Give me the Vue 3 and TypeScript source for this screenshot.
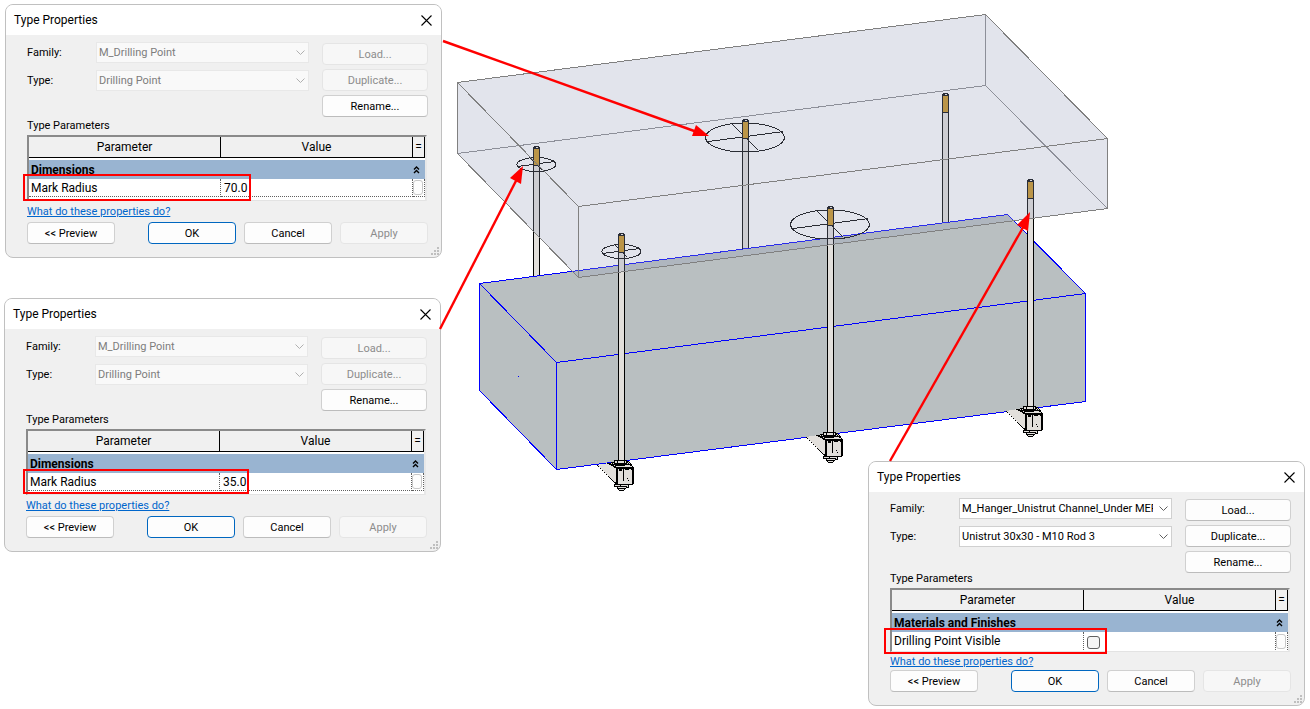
<script setup lang="ts">
interface TypeDialog {
  id: string
  left: number
  top: number
  family: string
  type: string
  locked: boolean
  compact: boolean
  group: string
  parameter: string
  value: string | null
}

interface Rod {
  x: number
  top: number
  bottom: number
  radius: number
}

const dialogs: TypeDialog[] = [
  { id: 'large', left: 5, top: 4, family: 'M_Drilling Point', type: 'Drilling Point', locked: true, compact: false, group: 'Dimensions', parameter: 'Mark Radius', value: '70.0' },
  { id: 'small', left: 4, top: 298, family: 'M_Drilling Point', type: 'Drilling Point', locked: true, compact: false, group: 'Dimensions', parameter: 'Mark Radius', value: '35.0' },
  { id: 'hanger', left: 868, top: 461, family: 'M_Hanger_Unistrut Channel_Under MEP', type: 'Unistrut 30x30 - M10 Rod 3', locked: false, compact: true, group: 'Materials and Finishes', parameter: 'Drilling Point Visible', value: null },
]

const backRods: Rod[] = [
  { x: 533, top: 147, bottom: 280, radius: 20 },
  { x: 742, top: 120, bottom: 253, radius: 40 },
  { x: 942, top: 94, bottom: 227, radius: 0 },
]

const frontRods: Rod[] = [
  { x: 618, top: 234, bottom: 462, radius: 20 },
  { x: 827, top: 207, bottom: 434, radius: 40 },
  { x: 1027, top: 180, bottom: 408, radius: 0 },
]

const allRods: Rod[] = [...backRods, ...frontRods]
</script>

<template>
  <main class="stage">
    <svg class="layer" role="img" aria-label="3D view of hangers with drilling points">
      <g class="crisp">
        <g v-for="rod in backRods" :key="rod.x">
          <rect class="rod" :x="rod.x" :y="rod.top" width="7" :height="rod.bottom - rod.top" />
          <path class="ink" :d="`M${rod.x + 0.5} ${rod.top}V${rod.bottom}M${rod.x + 6.5} ${rod.top}V${rod.bottom}`" />
        </g>

        <path class="block" d="M479.5 283.5L1007.5 214.5L1085.5 293.5V401.5L556.5 469.5L479.5 390.5Z" />
        <path class="block-edge" d="M479.5 283.5L556.5 362.5L1085.5 293.5M556.5 362.5V469.5" />
        <rect x="518" y="376" width="1" height="1" fill="#0000ff" />

        <g v-for="rod in frontRods" :key="rod.x">
          <rect class="rod" :x="rod.x" :y="rod.top" width="7" :height="rod.bottom - rod.top" />
          <path class="ink" :d="`M${rod.x + 0.5} ${rod.top}V${rod.bottom}M${rod.x + 6.5} ${rod.top}V${rod.bottom}`" />
        </g>

        <g v-for="rod in allRods" :key="'m' + rod.x">
          <g v-if="rod.radius" :transform="`translate(${rod.x + 3} ${rod.top + 17})`">
            <ellipse v-if="rod.radius > 30" class="ink" cx="0" cy="0.5" rx="39.5" ry="14.5" />
            <ellipse v-else class="ink" cx="0.5" cy="0.5" rx="19.5" ry="7" />
            <path v-if="rod.radius > 30" class="ink" d="M-36.5 4.5L38.5 -5.5M-13.5 -13.5L13.5 13.5" />
            <path v-else class="ink" d="M-18.5 2.5L18.5 -2.5M-6.5 -6.5L6.5 6.5" />
          </g>
        </g>

        <path class="slab" d="M457.5 82.5L986 14L1107.5 138.5V208.5L578.5 277.5L457.5 153.5Z" />
        <path class="slab-back" d="M457.5 153.5L985.5 85.5L1107.5 208.5M985.5 14.5V85.5" />
        <g v-for="rod in allRods" :key="'g' + rod.x">
          <rect class="tip" :x="rod.x + 0.5" :y="rod.top + 0.5" width="6" height="18" />
          <path class="tip-line" :d="`M${rod.x + 1} ${rod.top - 0.5}h5M${rod.x + 1} ${rod.top + 1.5}h5`" />
          <rect :x="rod.x + 3" :y="rod.top" width="2" height="1" fill="#d8d8dc" />
        </g>
        <path class="slab-edge" d="M457.5 82.5L985.5 14.5L1107.5 138.5V208.5L578.5 277.5L457.5 153.5ZL578.5 206.5L1107.5 138.5M578.5 206.5V277.5" />

        <g v-for="rod in frontRods" :key="'h' + rod.x" :transform="`translate(${rod.x + 3} ${rod.bottom - 1})`">
          <path fill="#e2dfdb" d="M-24 4L-12 2L0 6L-4 24Z" />
          <path class="ink" d="M-23.5 4.5L-4.5 23.5" stroke-dasharray="2 1" />
          <path class="metal" d="M-12.5 2.5L-2.5 0.5L7.5 0.5L12.5 6.5H-5.5Z" />
          <path class="ink" d="M-10.5 2.5L-3.5 7.5M-8.5 2.5L-3.5 5.5M-6.5 3.5H7.5M6.5 1.5L10.5 5.5" />
          <rect class="metal" x="-6.5" y="-0.5" width="12" height="3" />
          <path class="ink" d="M-3.5 -1.5V4.5M3.5 -1.5V4.5M-6.5 2.5L-3.5 4.5H3.5L6.5 2.5" />
          <rect class="metal" x="-4.5" y="7.5" width="16" height="16" />
          <path fill="#000" d="M-4 6H13V8H8V9H4V8H1V10H-2V8H-4ZM10 8H13V23H11V9H10Z" />
          <path class="ink" d="M-3.5 8V23M2.5 8V20M6.5 17v1M7.5 19v1M-5.5 21.5L-3.5 23.5" />
          <path class="metal" d="M-6.5 23.5V25.5H-3.5V27.5L-1.5 29.5H2.5L5.5 26.5H7.5V23.5Z" />
          <path class="ink" d="M-3.5 25.5H5.5M-0.5 24V26M-3.5 27.5H4.5" />
        </g>
      </g>
    </svg>

    <section
      v-for="d in dialogs"
      :key="d.id"
      class="dialog"
      :class="{ compact: d.compact }"
      :style="{ left: d.left + 'px', top: d.top + 'px' }"
      role="dialog"
      :aria-labelledby="d.id + '-title'"
    >
      <header class="titlebar">
        <h2 :id="d.id + '-title'">Type Properties</h2>
        <button class="close" type="button" aria-label="Close">
          <svg width="11" height="11" viewBox="0 0 11 11"><path d="M0.5 0.5L10.5 10.5M10.5 0.5L0.5 10.5" /></svg>
        </button>
      </header>

      <div class="body">
        <div class="top">
          <div class="fields">
            <label :for="d.id + '-family'">Family:</label>
            <span class="combo">
              <select :id="d.id + '-family'" :disabled="d.locked"><option>{{ d.family }}</option></select>
              <svg width="9" height="5" viewBox="0 0 9 5"><path d="M0.5 0.5L4.5 4.5L8.5 0.5" /></svg>
            </span>
            <label :for="d.id + '-type'">Type:</label>
            <span class="combo">
              <select :id="d.id + '-type'" :disabled="d.locked"><option>{{ d.type }}</option></select>
              <svg width="9" height="5" viewBox="0 0 9 5"><path d="M0.5 0.5L4.5 4.5L8.5 0.5" /></svg>
            </span>
          </div>
          <div class="side">
            <button class="btn" type="button" :disabled="d.locked">Load...</button>
            <button class="btn" type="button" :disabled="d.locked">Duplicate...</button>
            <button class="btn" type="button">Rename...</button>
          </div>
        </div>

        <h3 :id="d.id + '-params'">Type Parameters</h3>
        <div class="grid">
          <table :aria-labelledby="d.id + '-params'">
            <colgroup><col class="col-main" /><col class="col-main" /><col class="col-end" /></colgroup>
            <thead>
              <tr><th scope="col">Parameter</th><th scope="col">Value</th><th scope="col">=</th></tr>
            </thead>
            <tbody>
              <tr class="band">
                <th colspan="2" scope="rowgroup">{{ d.group }}</th>
                <td>
                  <button class="fold" type="button" aria-label="Collapse group">
                    <svg width="7" height="8" viewBox="0 0 7 8"><path d="M1 3.5L3.5 1L6 3.5M1 7L3.5 4.5L6 7" /></svg>
                  </button>
                </td>
              </tr>
              <tr class="row">
                <th scope="row"><label :for="d.id + '-value'">{{ d.parameter }}</label></th>
                <td>
                  <input v-if="d.value !== null" :id="d.id + '-value'" class="number" type="text" :value="d.value" />
                  <input v-else :id="d.id + '-value'" class="tick" type="checkbox" />
                </td>
                <td><button class="assoc" type="button" aria-label="Associate parameter"></button></td>
              </tr>
            </tbody>
          </table>
        </div>
        <a class="help" href="#">What do these properties do?</a>

        <footer class="actions">
          <button class="btn preview" type="button">&lt;&lt; Preview</button>
          <button class="btn primary" type="button">OK</button>
          <button class="btn" type="button">Cancel</button>
          <button class="btn" type="button" disabled>Apply</button>
        </footer>
      </div>
      <svg class="grip" width="8" height="8" viewBox="0 0 8 8">
        <path d="M6 0h2v2h-2zM3 3h2v2h-2zM6 3h2v2h-2zM0 6h2v2h-2zM3 6h2v2h-2zM6 6h2v2h-2z" />
      </svg>
    </section>

    <svg class="layer notes" aria-hidden="true">
      <g class="mark">
        <rect x="24" y="175" width="226" height="25" />
        <rect x="24" y="470" width="224" height="23" />
        <rect x="885" y="629" width="221" height="24" />
        <path d="M443 41L697 132" />
        <path d="M440 329L518 177" />
        <path d="M890 461L1025 224" />
      </g>
      <g class="head">
        <path d="M709 136L696 125L692 136Z" />
        <path d="M523 166L510 178L521 184Z" />
        <path d="M1030 212L1017 225L1028 231Z" />
      </g>
    </svg>
  </main>
</template>

<style>
body {
  margin: 0;
  background: #fff;
}
</style>

<style scoped>
.stage {
  position: relative;
  min-height: 100vh;
  overflow: hidden;
  font-family: Roboto, "Noto Sans", sans-serif;
  font-size: 11px;
  color: #000;
}

.layer {
  position: absolute;
  inset: 0;
  width: 100%;
  height: 100%;
  overflow: visible;
}

.notes {
  pointer-events: none;
}

.crisp {
  shape-rendering: crispEdges;
}

.rod {
  fill: #e2dfdb;
}

.ink {
  fill: none;
  stroke: #000;
}

.metal {
  fill: #e2dfdb;
  stroke: #000;
}

.block {
  fill: #b9bfc1;
  stroke: #0000ff;
}

.block-edge {
  fill: none;
  stroke: #0000ff;
}

.slab {
  fill: rgba(151, 159, 187, 0.28);
}

.slab-back {
  fill: none;
  stroke: #8d8f99;
}

.slab-edge {
  fill: none;
  stroke: #808080;
}

.tip {
  fill: #bb9548;
  stroke: #2a2d38;
}

.tip-line {
  stroke: #2a2d38;
}

.mark {
  fill: none;
  stroke: #ff0000;
  stroke-width: 2;
}

.mark path {
  stroke-width: 2.4;
}

.head {
  fill: #ff0000;
}

.dialog {
  position: absolute;
  box-sizing: border-box;
  width: 437px;
  overflow: hidden;
  border: 1px solid #c0c0c0;
  border-radius: 8px;
  background: #f0f0f0;
}

.titlebar {
  display: flex;
  align-items: center;
  justify-content: space-between;
  height: 30px;
  padding: 0 9px 0 8px;
  background: #fff;
}

h2,
h3 {
  margin: 0;
  font-weight: 400;
}

h2 {
  font-size: 12px;
  line-height: 16px;
}

.close {
  display: flex;
  padding: 0;
  border: 0;
  background: none;
}

.close path {
  fill: none;
  stroke: #000;
  stroke-width: 1.1;
}

.body {
  display: flex;
  flex-direction: column;
  align-items: stretch;
  padding: 7px 13px 13px 21px;
}

.top {
  display: flex;
  justify-content: space-between;
}

.fields {
  display: grid;
  grid-template-columns: 69px 213px;
  grid-auto-rows: 21px;
  row-gap: 7px;
  align-items: center;
}

.combo {
  position: relative;
  display: flex;
  height: 21px;
}

select {
  appearance: none;
  box-sizing: border-box;
  width: 100%;
  padding: 0 18px 0 2px;
  border: 1px solid #d0d0d0;
  border-radius: 0;
  background: #fff;
  color: #000;
  font: inherit;
}

select:disabled {
  border-color: #e8e8e8;
  background: #f9f9f9;
  color: #7d7d7d;
  opacity: 1;
}

.combo svg {
  position: absolute;
  top: 8px;
  right: 4px;
  pointer-events: none;
}

.combo path {
  fill: none;
  stroke: #606060;
}

select:disabled + svg path {
  stroke: #b0b0b0;
}

.side {
  display: flex;
  flex-direction: column;
  gap: 4px;
  width: 106px;
  padding-top: 1px;
}

.btn {
  box-sizing: border-box;
  height: 22px;
  padding: 0;
  border: 1px solid #d0d0d0;
  border-bottom-color: #bcbcbc;
  border-radius: 4px;
  background: #fdfdfd;
  color: #000;
  font: inherit;
}

.btn:disabled {
  border-color: #e5e5e5;
  background: #f7f7f7;
  color: #8c8c8c;
}

.btn.primary {
  border-color: #0067c0;
}

h3 {
  margin: 3px 0;
  font-size: 11px;
  line-height: 12px;
}

.grid {
  box-sizing: border-box;
  width: 400px;
  padding-bottom: 3px;
  border: 2px solid #8a8a8a;
  border-right-color: #e8e8e8;
  border-bottom: 1px solid #e3e3e3;
  background: #fff;
}

table {
  width: 100%;
  table-layout: fixed;
  border-collapse: separate;
  border-spacing: 0;
  font-size: 12px;
  line-height: 16px;
}

.col-end {
  width: 12px;
}

th,
td {
  box-sizing: border-box;
  padding: 0;
  font-weight: 400;
}

thead th {
  height: 21px;
  border-right: 1px solid #000;
  border-bottom: 1px solid #000;
  background: #f0f0f0;
}

.band th,
.band td {
  height: 21px;
  border-top: 2px solid #fff;
  background: #99b4d1;
  line-height: 14px;
}

.band th {
  padding-left: 2px;
  font-weight: 700;
  text-align: left;
}

.fold {
  display: flex;
  padding: 0;
  border: 0;
  background: none;
}

.fold path {
  fill: none;
  stroke: #000;
  stroke-width: 1.4;
}

.row th,
.row td {
  height: 18px;
  border-right: 1px dotted #606060;
  border-bottom: 1px dotted #606060;
}

.row th {
  padding-left: 2px;
  text-align: left;
}

.row label {
  display: block;
  line-height: 14px;
}

.number {
  display: block;
  box-sizing: border-box;
  width: 100%;
  height: 16px;
  padding: 0 3px;
  border: 0;
  background: none;
  color: #000;
  font: inherit;
}

.tick {
  appearance: none;
  display: block;
  box-sizing: border-box;
  width: 13px;
  height: 13px;
  margin: 2px 0 0 3px;
  border: 1px solid #606060;
  border-radius: 3px;
  background: #f5f5f5;
}

.assoc {
  display: block;
  box-sizing: border-box;
  width: 10px;
  height: 15px;
  padding: 0;
  border: 1px solid #c8c8c8;
  border-radius: 3px;
  background: #fdfdfd;
}

.help {
  align-self: flex-start;
  margin-top: 4px;
  color: #0066cc;
  line-height: 14px;
}

.actions {
  display: flex;
  gap: 8px;
  margin-top: 3px;
}

.actions .btn {
  width: 88px;
}

.actions .preview {
  margin-right: 25px;
}

.compact .body {
  padding-top: 6px;
}

.compact h3 {
  margin-top: 0;
}

.compact .grid {
  padding-bottom: 1px;
}

.compact .row th,
.compact .row td {
  border-bottom: 0;
}

.compact .help {
  margin-top: 3px;
}

.compact .actions {
  margin-top: 1px;
}

.grip {
  position: absolute;
  right: 2px;
  bottom: 2px;
  fill: #bfbfbf;
}
</style>
